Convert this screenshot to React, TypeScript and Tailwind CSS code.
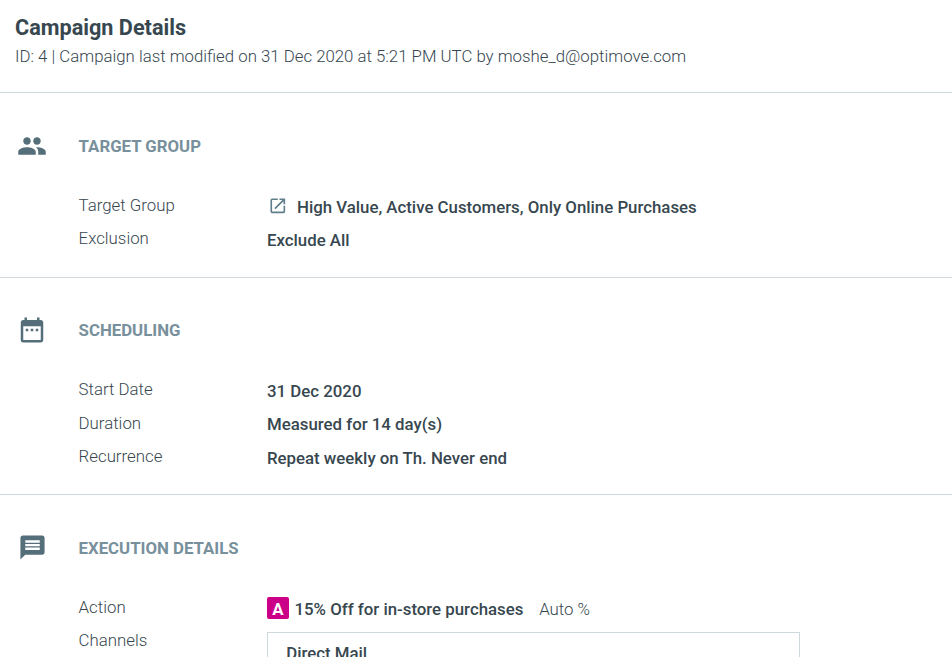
import type { ReactNode } from 'react';
import { MdPeople, MdDateRange, MdMessage, MdOpenInNew } from 'react-icons/md';

type SectionProps = {
    icon: ReactNode;
    title: string;
    className?: string;
    children: ReactNode;
};

function Section({ icon, title, className = '', children }: SectionProps) {
    return (
        <section className={`flex border-t border-[#cfd8dc] ${className}`}>
            <div className="w-[78.6px] pl-[17px] text-[#546e7a]">{icon}</div>
            <div className="flex-1">
                <h2 className="h-6 text-[16.8px] leading-6 font-bold text-[#78909c]">{title}</h2>
                <div className="pt-[34px]">{children}</div>
            </div>
        </section>
    );
}

function Row({ label, children }: { label: string; children: ReactNode }) {
    return (
        <div className="flex h-[33.4px] text-[16.82px] leading-6">
            <div className="w-[188.4px] pt-[1.3px] font-light">{label}</div>
            <div className="flex pt-[3px] font-medium">{children}</div>
        </div>
    );
}

export default function App() {
    return (
        <main className="h-[657px] w-[952px] overflow-hidden bg-white font-[Roboto,sans-serif] text-[#37474f]">
            <header className="h-[92px] pt-[13px] pl-[15px]">
                <h1 className="text-[21.65px] leading-[30px] font-bold">Campaign Details</h1>
                <p className="pt-[1px] text-[16.81px] leading-6 font-light">
                    ID: 4 | Campaign last modified on 31 Dec 2020 at 5:21 PM UTC by moshe_d@optimove.com
                </p>
            </header>

            <Section icon={<MdPeople size={30} className="-mt-[3px]" />} title="TARGET GROUP" className="h-[185px] pt-[40.7px]">
                <Row label="Target Group">
                    <MdOpenInNew size={19.6} className="mt-[1px] mr-[9.4px] ml-[1px] text-[#607d8b]" />
                    High Value, Active Customers, Only Online Purchases
                </Row>
                <Row label="Exclusion">Exclude All</Row>
            </Section>

            <Section icon={<MdDateRange size={30} className="-mt-[3px]" />} title="SCHEDULING" className="h-[217px] pt-[40px]">
                <Row label="Start Date">31 Dec 2020</Row>
                <Row label="Duration">Measured for 14 day(s)</Row>
                <Row label="Recurrence">Repeat weekly on Th. Never end</Row>
            </Section>

            <Section icon={<MdMessage size={29} className="-mt-[3px] ml-[1px]" />} title="EXECUTION DETAILS" className="pt-[40.7px]">
                <Row label="Action">
                    <span className="mr-[5.5px] h-[22px] w-[22px] rounded-[2px] bg-[#cc0088] text-center leading-[25px] font-bold text-white">
                        A
                    </span>
                    15% Off for in-store purchases
                    <span className="ml-[15.8px] font-light">Auto %</span>
                </Row>
                <Row label="Channels">
                    <div className="mt-[2px] h-20 w-[533px] border border-[#cfd8dc] pt-2 pl-[18.2px]">Direct Mail</div>
                </Row>
            </Section>
        </main>
    );
}
